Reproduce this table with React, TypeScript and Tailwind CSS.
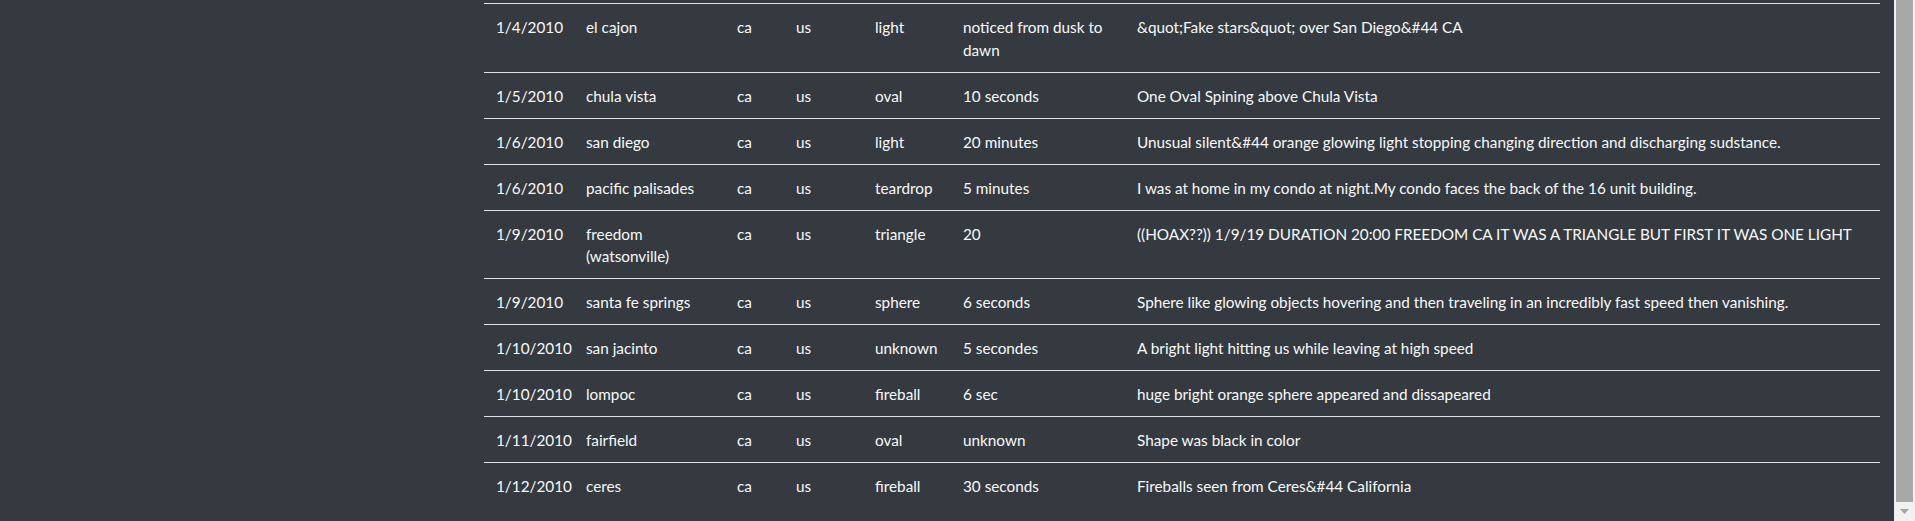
const rows = [
  ['1/4/2010', 'el cajon', 'ca', 'us', 'light', 'noticed from dusk to dawn', '&quot;Fake stars&quot; over San Diego&#44 CA'],
  ['1/5/2010', 'chula vista', 'ca', 'us', 'oval', '10 seconds', 'One Oval Spining above Chula Vista'],
  ['1/6/2010', 'san diego', 'ca', 'us', 'light', '20 minutes', 'Unusual silent&#44 orange glowing light stopping changing direction and discharging sudstance.'],
  ['1/6/2010', 'pacific palisades', 'ca', 'us', 'teardrop', '5 minutes', 'I was at home in my condo at night.My condo faces the back of the 16 unit building.'],
  ['1/9/2010', 'freedom (watsonville)', 'ca', 'us', 'triangle', '20', '((HOAX??)) 1/9/19 DURATION 20:00 FREEDOM CA IT WAS A TRIANGLE BUT FIRST IT WAS ONE LIGHT'],
  ['1/9/2010', 'santa fe springs', 'ca', 'us', 'sphere', '6 seconds', 'Sphere like glowing objects hovering and then traveling in an incredibly fast speed then vanishing.'],
  ['1/10/2010', 'san jacinto', 'ca', 'us', 'unknown', '5 secondes', 'A bright light hitting us while leaving at high speed'],
  ['1/10/2010', 'lompoc', 'ca', 'us', 'fireball', '6 sec', 'huge bright orange sphere appeared and dissapeared'],
  ['1/11/2010', 'fairfield', 'ca', 'us', 'oval', 'unknown', 'Shape was black in color'],
  ['1/12/2010', 'ceres', 'ca', 'us', 'fireball', '30 seconds', 'Fireballs seen from Ceres&#44 California'],
]

const widths = ['w-[90px]', 'w-[151px]', 'w-[59px]', 'w-[79px]', 'w-[88px]', 'w-[174px]', '']

export default function App() {
  return (
    <div className="flex h-[521px] w-full overflow-hidden bg-[#343a40] font-['Lato','Open_Sans',sans-serif] text-[15.3px] leading-[22.5px] text-[#f8f9fa]">
      <div className="w-[484px] shrink-0" />
      <div className="flex-1 pt-[3px]">
        <table className="w-full table-fixed border-collapse">
          <colgroup>
            {widths.map((w, i) => (
              <col key={i} className={w} />
            ))}
          </colgroup>
          <tbody>
            {rows.map((r, i) => (
              <tr key={i} className="border-t border-[#dee2e6] align-top">
                {r.map((c, j) => (
                  <td key={j} className="px-3 pt-[12.25px] pb-[10.25px]">
                    {c}
                  </td>
                ))}
              </tr>
            ))}
          </tbody>
        </table>
      </div>
      <div className="w-[14px] shrink-0" />
      <div className="flex w-[21px] shrink-0 flex-col bg-[#f1f1f1] px-[2px]">
        <div className="flex-1 bg-[#a8a8a8]" />
        <div className="flex h-[19px] items-center justify-center">
          <svg width="9" height="6" viewBox="0 0 9 6">
            <path d="M0 0 H9 L4.5 5 Z" fill="#a3a3a3" />
          </svg>
        </div>
      </div>
    </div>
  )
}
